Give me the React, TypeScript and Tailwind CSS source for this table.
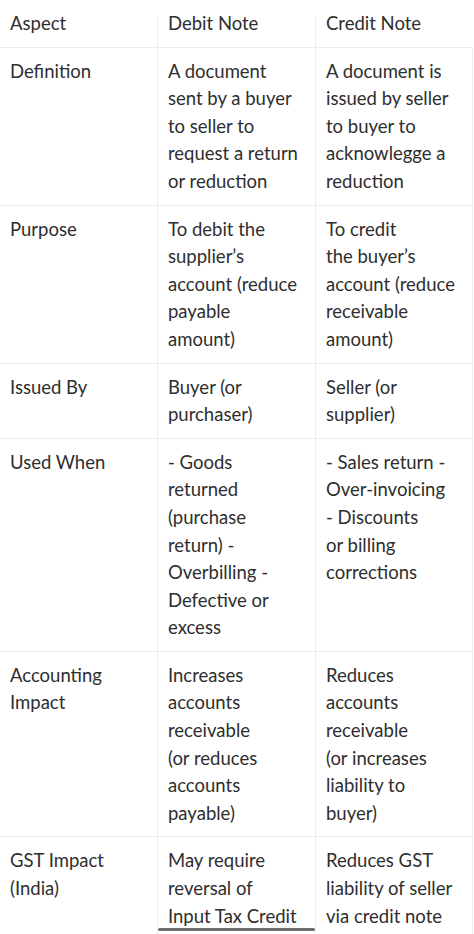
const rows: { aspect: string[]; debit: string[]; credit: string[] }[] = [
  {
    aspect: ['Definition'],
    debit: ['A document', 'sent by a buyer', 'to seller to', 'request a return', 'or reduction'],
    credit: ['A document is', 'issued by seller', 'to buyer to', 'acknowlegge a', 'reduction'],
  },
  {
    aspect: ['Purpose'],
    debit: ['To debit the', 'supplier’s', 'account (reduce', 'payable', 'amount)'],
    credit: ['To credit', 'the buyer’s', 'account (reduce', 'receivable', 'amount)'],
  },
  {
    aspect: ['Issued By'],
    debit: ['Buyer (or', 'purchaser)'],
    credit: ['Seller (or', 'supplier)'],
  },
  {
    aspect: ['Used When'],
    debit: ['- Goods', 'returned', '(purchase', 'return) -', 'Overbilling -', 'Defective or', 'excess'],
    credit: ['- Sales return -', 'Over-invoicing', '- Discounts', 'or billing', 'corrections'],
  },
  {
    aspect: ['Accounting', 'Impact'],
    debit: ['Increases', 'accounts', 'receivable', '(or reduces', 'accounts', 'payable)'],
    credit: ['Reduces', 'accounts', 'receivable', '(or increases', 'liability to', 'buyer)'],
  },
  {
    aspect: ['GST Impact', '(India)'],
    debit: ['May require', 'reversal of', 'Input Tax Credit'],
    credit: ['Reduces GST', 'liability of seller', 'via credit note'],
  },
]

function Lines({ lines }: { lines: string[] }) {
  return (
    <>
      {lines.map((l, i) => (
        <div key={i} className="whitespace-nowrap">
          {l}
        </div>
      ))}
    </>
  )
}

export default function App() {
  return (
    <div className="relative h-[934px] w-[474px] overflow-hidden bg-white font-['Lato',sans-serif] text-[18.5px] leading-[27.6px] text-[#2e2e2e]">
      {/* header */}
      <div className="grid w-[473px] grid-cols-[157px_158px_158px] border-b border-[#ececec]">
        <div className="pl-[10px] pt-[10px] pb-[9px]">Aspect</div>
        <div className="bg-[linear-gradient(#ececec,#ececec)] bg-[length:1px_40px] bg-[position:0_17px] bg-no-repeat pl-[11px] pt-[10px] pb-[9px]">
          Debit Note
        </div>
        <div className="bg-[linear-gradient(#ececec,#ececec)] bg-[length:1px_40px] bg-[position:0_17px] bg-no-repeat pl-[11px] pt-[10px] pb-[9px]">
          Credit Note
        </div>
      </div>

      {rows.map((r, i) => (
        <div key={i} className="grid w-[473px] grid-cols-[157px_158px_158px] border-b border-[#ececec]">
          <div className="pl-[10px] pt-[10px] pb-[9px]">
            <Lines lines={r.aspect} />
          </div>
          <div className="border-l border-[#ececec] pl-[10px] pt-[10px] pb-[9px]">
            <Lines lines={r.debit} />
          </div>
          <div className="border-x border-[#ececec] pl-[10px] pt-[10px] pb-[9px]">
            <Lines lines={r.credit} />
          </div>
        </div>
      ))}

      {/* scroll indicator */}
      <div className="absolute left-[158px] top-[928px] h-[3px] w-[157px] rounded-full bg-[#6e6e6e]" />
    </div>
  )
}
